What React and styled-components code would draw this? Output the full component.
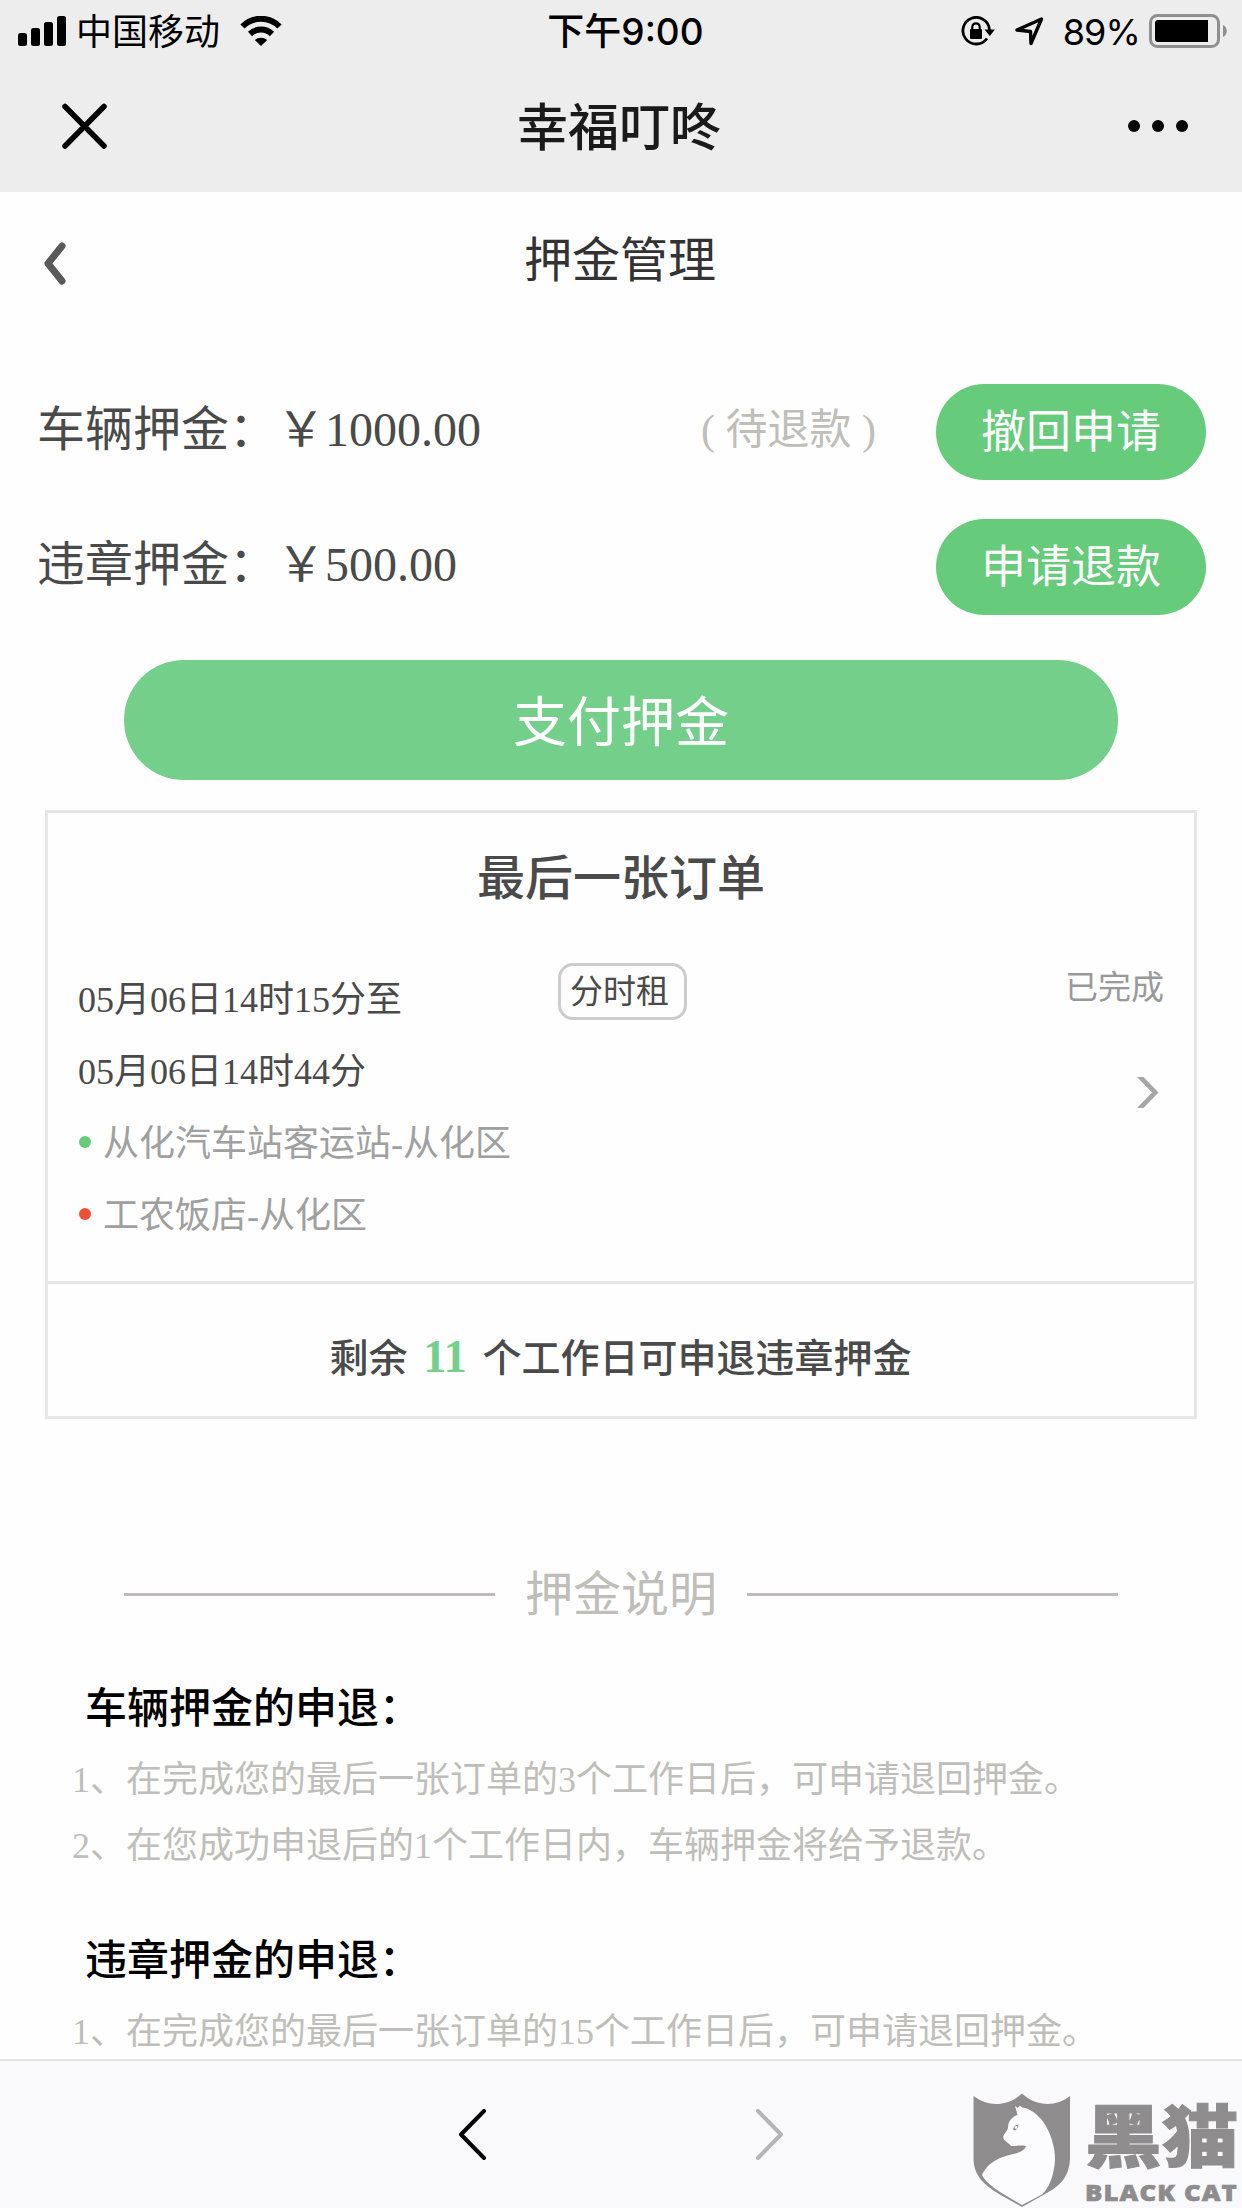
import React from 'react';
import styled, { createGlobalStyle } from 'styled-components';

const GlobalStyle = createGlobalStyle`
  * {
    box-sizing: border-box;
  }

  body {
    margin: 0;
    background: #fff;
  }
`;

const serif = `'Liberation Serif', 'Noto Sans CJK SC', serif`;
const sans = `Inter, 'Noto Sans CJK SC', sans-serif`;

const Phone = styled.div`
  display: flex;
  flex-direction: column;
  width: 1242px;
  height: 2208px;
  overflow: hidden;
  background: #fefefe;
  color: #4a4a4a;
  font-family: ${serif};
`;

const Header = styled.header`
  flex: none;
  height: 192px;
  background: #ededed;
  color: #000;
  font-family: ${sans};
`;

const StatusBar = styled.div`
  display: grid;
  grid-template-columns: 1fr auto 1fr;
  align-items: center;
  height: 60px;
  padding: 1px 15px 0 18px;
  font-size: 36px;
  line-height: 58px;

  span {
    padding-top: 2px;
  }
`;

const StatusLeft = styled.div`
  display: flex;
  align-items: center;

  span {
    margin: 0 20px 0 10px;
  }
`;

const StatusTime = styled.div`
  padding: 1px 0 0 6px;
  font-weight: 500;
  font-size: 37px;
`;

const StatusRight = styled.div`
  display: flex;
  align-items: center;
  justify-content: flex-end;

  span {
    margin: 0 9px 0 19px;
    letter-spacing: -0.9px;
  }
`;

const NavBar = styled.div`
  display: flex;
  align-items: center;
  justify-content: space-between;
  height: 132px;
  padding: 0 53px 0 61px;
`;

const NavTitle = styled.h1`
  margin: 0 0 0 4px;
  padding-top: 2px;
  color: #1a1a1a;
  font-size: 51px;
  font-weight: 500;
  line-height: 129px;
`;

const Main = styled.main`
  flex: 1;
  min-height: 0;
  overflow: hidden;
`;

const PageHead = styled.div`
  display: grid;
  grid-template-columns: 1fr auto 1fr;
  align-items: center;
  height: 138px;
  padding: 0 46px 0 44px;

  svg {
    margin-top: 5px;
  }
`;

const PageTitle = styled.h2`
  margin: 0;
  color: #333;
  font-size: 48px;
  font-weight: 400;
  line-height: 136px;
`;

const Deposits = styled.div`
  display: flex;
  flex-direction: column;
  gap: 39px;
  padding: 54px 36px 0 37px;
`;

const DepositRow = styled.div`
  display: flex;
  align-items: center;
  height: 96px;
  font-size: 48px;
  line-height: 92px;
`;

const DepositText = styled.span`
  height: 96px;
`;

const DepositState = styled.span`
  height: 96px;
  margin: 0 60px 0 auto;
  color: #bfbeba;
  font-size: 42px;
`;

const PillButton = styled.button`
  width: 270px;
  height: 96px;
  margin-left: ${(props) => (props.$alone ? 'auto' : '0')};
  padding: 0 0 7px;
  border: 0;
  border-radius: 48px;
  background: #66cb7b;
  color: #fff;
  font-family: ${serif};
  font-size: 45px;
`;

const PayButton = styled.button`
  display: block;
  width: 994px;
  height: 120px;
  margin: 45px auto 30px;
  padding: 0 0 4px;
  border: 0;
  border-radius: 60px;
  background: #73cf8a;
  color: #fff;
  font-family: ${serif};
  font-size: 54px;
`;

const Card = styled.section`
  width: 1152px;
  height: 609px;
  margin: 0 45px;
  border: 3px solid #e6e6e6;
`;

const CardTitle = styled.h3`
  margin: 0;
  padding-top: 1px;
  font-size: 48px;
  font-weight: 500;
  line-height: 130px;
  text-align: center;
`;

const Order = styled.div`
  display: grid;
  grid-template-columns: 480px 130px 1fr;
  height: 337px;
  padding: 19px 30px 0 30px;
`;

const OrderInfo = styled.div`
  padding-top: 1px;
  font-size: 36px;
  line-height: 72px;
  white-space: nowrap;
`;

const Station = styled.div`
  display: flex;
  align-items: center;
  color: #a0a0a0;

  &::before {
    content: '';
    width: 12px;
    height: 12px;
    margin: -4px 12px 0 1px;
    border-radius: 50%;
    background: ${(props) => props.$dot};
  }
`;

const Tag = styled.div`
  width: 129px;
  height: 57px;
  border: 3px solid #ccc;
  border-radius: 15px;
  padding-left: 9px;
  font-size: 33px;
  line-height: 52px;
`;

const OrderState = styled.div`
  display: flex;
  flex-direction: column;
  align-items: flex-end;
  color: #999;
  font-size: 33px;
  line-height: 51px;

  svg {
    margin: 63px 5px 0 0;
  }
`;

const Remain = styled.div`
  height: 135px;
  padding-right: 1px;
  border-top: 3px solid #e6e6e6;
  font-size: 39px;
  font-weight: 500;
  line-height: 149px;
  text-align: center;

  b {
    margin: 0 6px;
    color: #73cf8a;
    font-size: 46px;
    line-height: 1;
  }
`;

const Divider = styled.div`
  display: flex;
  align-items: center;
  gap: 30px;
  margin: 139px 124px 0;
  color: #bfbeba;
  font-size: 48px;
  line-height: 72px;

  span {
    padding-top: 1px;
    margin-bottom: -1px;
  }

  &::before,
  &::after {
    content: '';
    flex: 1;
    height: 3px;
    background: #bdbcb8;
  }
`;

const Rule = styled.section`
  height: 252px;
  padding-left: 72px;
`;

const RuleTitle = styled.h4`
  margin: 0 0 5px;
  padding-left: 13px;
  color: #000;
  font-size: 42px;
  font-weight: 500;
  line-height: 66px;
`;

const RuleLine = styled.p`
  margin: 0;
  color: #bfbeba;
  font-size: 36px;
  line-height: 66px;
  white-space: nowrap;
`;

const Rules = styled.div`
  padding-top: 46px;
`;

const Toolbar = styled.footer`
  display: flex;
  flex: none;
  align-items: flex-start;
  height: 149px;
  border-top: 2px solid #e3e3e4;
  background: #f9f9fc;
  padding: 48px 0 0 458px;
  gap: 268px;
`;

const Watermark = styled.div`
  display: flex;
  gap: 14px;
  margin: -16px 0 0 -79px;
  color: #8e8c8d;
`;

const WatermarkText = styled.div`
  display: flex;
  flex-direction: column;
  align-items: flex-start;
  padding-top: 10px;

  strong {
    height: 77px;
    font: 900 68px/70px 'Liberation Sans', 'Noto Sans CJK SC', sans-serif;
    transform: scaleX(1.13);
    transform-origin: left;
    -webkit-text-stroke: 1px #8e8c8d;
  }

  span {
    font: 800 23px/24px 'Open Sans', sans-serif;
    letter-spacing: 1px;
    white-space: nowrap;
    transform: scaleX(1.12);
    transform-origin: left;
    -webkit-text-stroke: 0.6px #8e8c8d;
  }
`;

const deposits = [
  { name: '车辆押金：', amount: '￥1000.00', state: '( 待退款 )', action: '撤回申请' },
  { name: '违章押金：', amount: '￥500.00', action: '申请退款' },
];

const rules = [
  {
    title: '车辆押金的申退：',
    lines: [
      '1、在完成您的最后一张订单的3个工作日后，可申请退回押金。',
      '2、在您成功申退后的1个工作日内，车辆押金将给予退款。',
    ],
  },
  {
    title: '违章押金的申退：',
    lines: ['1、在完成您的最后一张订单的15个工作日后，可申请退回押金。'],
  },
];

function App() {
  return (
    <Phone>
      <GlobalStyle />
      <Header>
        <StatusBar>
          <StatusLeft>
            <SignalIcon />
            <span>中国移动</span>
            <WifiIcon />
          </StatusLeft>
          <StatusTime>下午9:00</StatusTime>
          <StatusRight>
            <RotationLockIcon />
            <LocationIcon />
            <span>89%</span>
            <BatteryIcon />
          </StatusRight>
        </StatusBar>
        <NavBar>
          <CloseIcon />
          <NavTitle>幸福叮咚</NavTitle>
          <MoreIcon />
        </NavBar>
      </Header>

      <Main>
        <PageHead>
          <BackIcon />
          <PageTitle>押金管理</PageTitle>
        </PageHead>

        <Deposits>
          {deposits.map((item) => (
            <DepositRow key={item.name}>
              <DepositText>{item.name}{item.amount}</DepositText>
              {item.state && <DepositState>{item.state}</DepositState>}
              <PillButton $alone={!item.state}>{item.action}</PillButton>
            </DepositRow>
          ))}
        </Deposits>
        <PayButton>支付押金</PayButton>

        {/* last order */}
        <Card>
          <CardTitle>最后一张订单</CardTitle>
          <Order>
            <OrderInfo>
              <div>05月06日14时15分至</div>
              <div>05月06日14时44分</div>
              <Station $dot="#66cb7b">从化汽车站客运站-从化区</Station>
              <Station $dot="#ee4f38">工农饭店-从化区</Station>
            </OrderInfo>
            <Tag>分时租</Tag>
            <OrderState>
              已完成
              <ChevronIcon />
            </OrderState>
          </Order>
          <Remain>剩余 <b>11</b> 个工作日可申退违章押金</Remain>
        </Card>

        {/* deposit rules */}
        <Divider><span>押金说明</span></Divider>
        <Rules>
          {rules.map((rule) => (
            <Rule key={rule.title}>
              <RuleTitle>{rule.title}</RuleTitle>
              {rule.lines.map((line) => (
                <RuleLine key={line}>{line}</RuleLine>
              ))}
            </Rule>
          ))}
        </Rules>
      </Main>

      <Toolbar>
        <ArrowIcon color="#000" d="M26 2L3 25.500L26 49" />
        <ArrowIcon color="#b5b5b7" d="M3 2L26 25.500L3 49" />
        <Watermark>
          <ShieldCatIcon />
          <WatermarkText>
            <strong>黑猫</strong>
            <span>BLACK CAT</span>
          </WatermarkText>
        </Watermark>
      </Toolbar>
    </Phone>
  );
}

function SignalIcon() {
  return (
    <svg width="48" height="30" viewBox="0 0 48 30">
      <rect x="0" y="17" width="9" height="13" rx="2.500" />
      <rect x="13" y="12" width="9" height="18" rx="2.500" />
      <rect x="26" y="6" width="9" height="24" rx="2.500" />
      <rect x="39" y="0" width="9" height="30" rx="2.500" />
    </svg>
  );
}

function WifiIcon() {
  return (
    <svg width="42" height="30" viewBox="0 0 42 30">
      <path d="M2.500 10.500a26 26 0 0 1 37 0M10 18a15.800 15.800 0 0 1 22 0" fill="none" stroke="#000" strokeWidth="6" />
      <path d="M14.800 24a9.500 9.500 0 0 1 12.400 0L21 30z" />
    </svg>
  );
}

function RotationLockIcon() {
  return (
    <svg width="34" height="30" viewBox="0 0 34 30">
      <path d="M26 22.500A13.300 13.300 0 1 1 28.500 14" fill="none" stroke="#000" strokeWidth="2.800" />
      <path d="M23.500 13.500h10.500l-5.200 6.500z" />
      <rect x="9" y="13" width="12" height="10" rx="1" />
      <path d="M11.300 14v-3a3.700 3.700 0 0 1 7.400 0v3" fill="none" stroke="#000" strokeWidth="2.200" />
    </svg>
  );
}

const LocationSvg = styled.svg`
  margin-left: 20px;
`;

function LocationIcon() {
  return (
    <LocationSvg width="29" height="29" viewBox="0 0 29 29">
      <path d="M26.500 2L2 13l13.500 1.500L16 26.500z" fill="none" stroke="#000" strokeWidth="3.400" strokeLinejoin="round" />
    </LocationSvg>
  );
}

function BatteryIcon() {
  return (
    <svg width="78" height="34" viewBox="0 0 78 34">
      <rect x="1.500" y="1.500" width="68" height="31" rx="7" fill="none" stroke="#8f8f8f" strokeWidth="3" />
      <path d="M74 11c5 2 5 10 0 12z" fill="#8f8f8f" />
      <path d="M9 6h50v22H9a3 3 0 0 1-3-3V9a3 3 0 0 1 3-3z" />
    </svg>
  );
}

function CloseIcon() {
  return (
    <svg width="46" height="46" viewBox="0 0 46 46">
      <path d="M4 3.500l39 39.500M43 3.500l-39 39.500" stroke="#000" strokeWidth="5.500" strokeLinecap="round" />
    </svg>
  );
}

function MoreIcon() {
  return (
    <svg width="62" height="12" viewBox="0 0 62 12">
      <circle cx="7" cy="6" r="6" />
      <circle cx="31" cy="6" r="6" />
      <circle cx="55" cy="6" r="6" />
    </svg>
  );
}

function BackIcon() {
  return (
    <svg width="22" height="43" viewBox="0 0 22 43">
      <path d="M18 4L4 21.500L18 39" fill="none" stroke="#595959" strokeWidth="7" strokeLinecap="round" strokeLinejoin="round" />
    </svg>
  );
}

function ChevronIcon() {
  return (
    <svg width="22" height="31" viewBox="0 0 22 31">
      <path d="M0 0h6.500l15 15.500-15 15.500H0l15-15.500z" fill="#a6a6a6" />
    </svg>
  );
}

function ArrowIcon({ color, d }) {
  return (
    <svg width="29" height="51" viewBox="0 0 29 51">
      <path d={d} fill="none" stroke={color} strokeWidth="4" strokeLinecap="round" strokeLinejoin="round" />
    </svg>
  );
}

function ShieldCatIcon() {
  return (
    <svg width="98" height="115" viewBox="0 0 98 115">
      <path d="M0.500 3C15 14 34 14 49 0.500C64 14 83 14 97 3V66C96 86 85 94 72 101L49 114L26 101C12 92 1 84 0.500 66z" fill="#8e8c8d" />
      <path d="M42 12.700L44.500 15L47 12.700L49 14.500C57 15 65 22 70 28.500C78 40 82 54 82 67C81 83 76 95 69 101.500L49 112L27 99C18 93 12 88 9 82C15 68 31 63 40 61C47 59.500 52 57 53 53C48 52 43 53 38 53C35 49 30 48 30.300 44C31 40 34 39 35 35C35 28 39 24 44.500 22z" fill="#fcfcfe" />
      <path d="M40 36.500Q41 32 45.500 31.500Q45.500 36.500 41 37.500z" fill="#8e8c8d" />
      <circle cx="43" cy="34.500" r="1.400" fill="#fcfcfe" />
    </svg>
  );
}

export default App;
